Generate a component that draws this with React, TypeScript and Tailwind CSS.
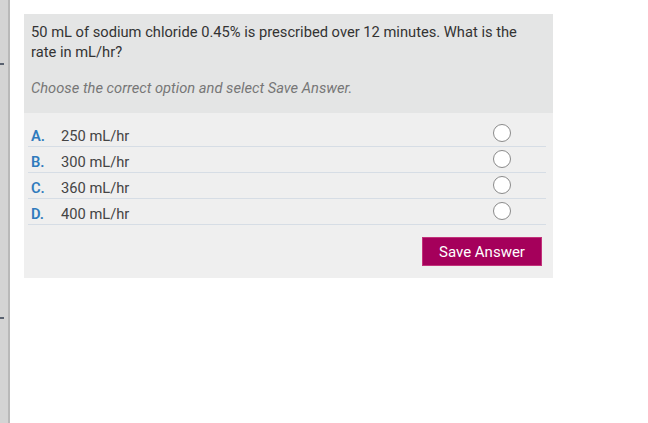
import React from "react";

const options = [
  { l: "A.", v: "250 mL/hr" },
  { l: "B.", v: "300 mL/hr" },
  { l: "C.", v: "360 mL/hr" },
  { l: "D.", v: "400 mL/hr" },
];

export default function App() {
  return (
    <div
      className="flex w-[648px] h-[423px] bg-white overflow-hidden"
      style={{ fontFamily: "Roboto, 'Liberation Sans', Arial, sans-serif" }}
    >
      <div className="relative w-[10px] h-full bg-[#d4d4d4] border-r-2 border-[#b9b9b9] shrink-0">
        <div className="absolute left-0 top-[63px] w-[4px] h-[2px] bg-[#5a6270]" />
        <div className="absolute left-0 top-[317px] w-[4px] h-[2px] bg-[#5a6270]" />
      </div>
      <div className="pt-[14px] pl-[14px]">
        <div className="w-[529px]">
          <div className="bg-[#e4e5e5] pl-[7px] pr-[22px] pt-[8px] pb-[15px]">
            <p className="text-[14.7px] leading-[20px] text-[#333333]">
              50 mL of sodium chloride 0.45% is prescribed over 12 minutes. What is the rate in mL/hr?
            </p>
            <p className="mt-[16px] text-[14.7px] leading-[20px] italic text-[#777777]">
              Choose the correct option and select Save Answer.
            </p>
          </div>
          <div className="bg-[#efefef] pt-[8px] pb-[12px]">
            <div className="ml-[4px] mr-[7px]">
              {options.map((o) => (
                <div
                  key={o.l}
                  className="flex h-[26px] border-b border-[#d6dde5]"
                >
                  <div className="flex pl-[3px] pt-[5px] text-[14.7px] leading-[20px]">
                    <span className="w-[30px] font-semibold text-[#2f7bbd]">{o.l}</span>
                    <span className="text-[#444444]">{o.v}</span>
                  </div>
                  <div className="ml-auto mr-[35px] mt-[3px] w-[18px] h-[18px] rounded-full border border-[#8a8a8a] bg-white" />
                </div>
              ))}
            </div>
            <div className="flex justify-end mt-[12px] mr-[11px]">
              <button className="w-[120px] h-[29px] bg-[#a5005b] border border-[#c2327a] text-white text-[15px] leading-[20px]">
                Save Answer
              </button>
            </div>
          </div>
        </div>
      </div>
    </div>
  );
}
